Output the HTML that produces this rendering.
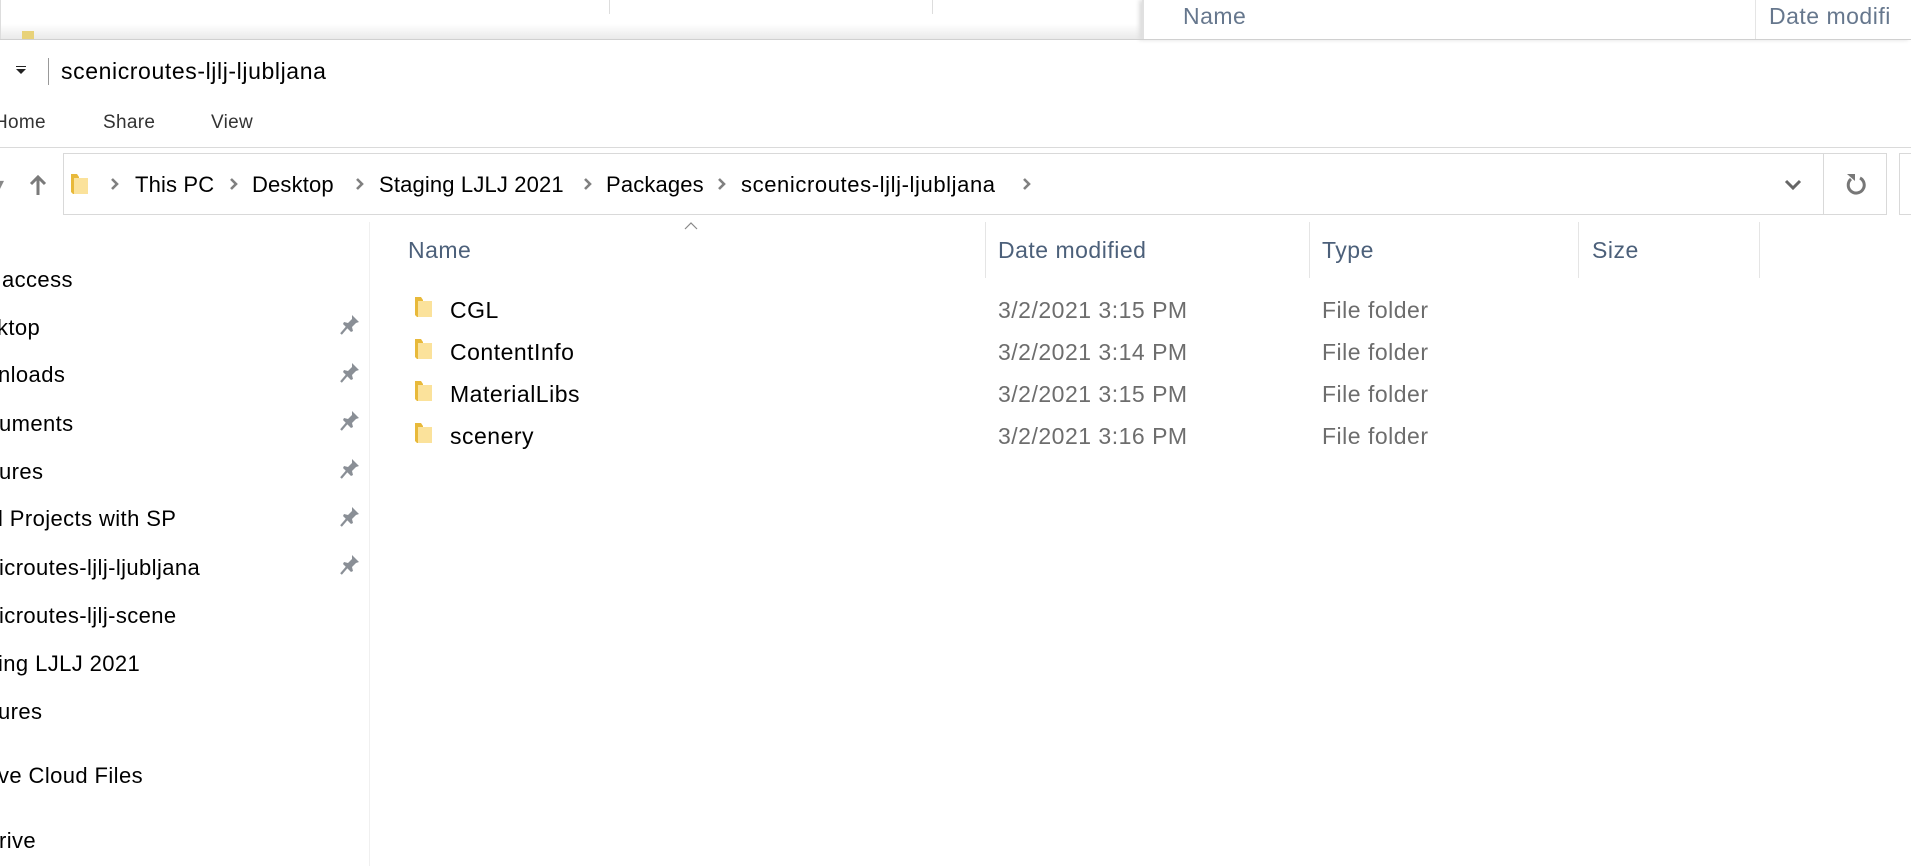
<!DOCTYPE html>
<html><head><meta charset="utf-8"><style>
*{margin:0;padding:0;box-sizing:border-box}
body{width:1911px;height:866px;overflow:hidden;background:#fff;position:relative;font-family:"Liberation Sans",sans-serif;color:#000}
.a{position:absolute;white-space:nowrap;line-height:26px;font-size:23px;letter-spacing:0.5px}
.n{font-size:22px;letter-spacing:0.4px}
.b{font-size:22px;letter-spacing:0.15px}
.h{color:#4c607a}
.g{color:#6d6d6d}
.sep{position:absolute;width:1px;background:#e5e5e5}
.fold{position:absolute;width:19px;height:22px}
.pin{position:absolute;width:22px;height:24px}
.chev{position:absolute}
</style></head><body>
<!-- background window strip -->
<div style="position:absolute;left:0;top:0;width:1142px;height:40px;background:linear-gradient(#fff 60%,#e8e8e8);border-left:1px solid #ddd"></div>
<div style="position:absolute;left:609px;top:0;width:1px;height:14px;background:#ddd"></div>
<div style="position:absolute;left:932px;top:0;width:1px;height:14px;background:#ddd"></div>
<div style="position:absolute;left:22px;top:31px;width:12px;height:9px;background:#e8d27a"></div>
<div style="position:absolute;left:1142px;top:0;width:769px;height:40px;background:#fff;border-left:2px solid #e0e0e0;box-shadow:-3px 0 4px #ddd"></div>
<div class="a h" style="left:1183px;top:3px;font-size:23px;opacity:.85">Name</div>
<div style="position:absolute;left:1755px;top:0;width:1px;height:40px;background:#e5e5e5"></div>
<div class="a h" style="left:1769px;top:3px;font-size:23px;opacity:.85">Date modifi</div>
<div style="position:absolute;left:0;top:39px;width:1911px;height:1px;background:#d0d0d0"></div>

<!-- title -->
<div style="position:absolute;left:16px;top:69px;width:0;height:0;border-left:5px solid transparent;border-right:5px solid transparent;border-top:5px solid #222"></div>
<div style="position:absolute;left:16px;top:66px;width:10px;height:1px;background:#222"></div>
<div style="position:absolute;left:48px;top:58px;width:1px;height:27px;background:#999"></div>
<div class="a" style="left:61px;top:58px;font-size:23px;letter-spacing:0.6px">scenicroutes-ljlj-ljubljana</div>

<!-- ribbon -->
<div class="a" style="left:-6px;top:110px;font-size:19px;letter-spacing:0.3px;color:#333">Home</div>
<div class="a" style="left:103px;top:110px;font-size:19px;letter-spacing:0.3px;color:#333">Share</div>
<div class="a" style="left:211px;top:110px;font-size:19px;letter-spacing:0.3px;color:#333">View</div>
<div style="position:absolute;left:0;top:147px;width:1911px;height:1px;background:#dadada"></div>

<!-- address bar -->
<div class="a" style="left:-4px;top:172px;color:#888;font-size:16px">▾</div>
<svg style="position:absolute;left:28px;top:173px" width="20" height="24" viewBox="0 0 20 24"><path d="M10 22V4M3 11l7-7 7 7" stroke="#7a7a7a" stroke-width="3" fill="none"/></svg>
<div style="position:absolute;left:63px;top:153px;width:1824px;height:62px;border:1px solid #d9d9d9"></div>
<div style="position:absolute;left:1823px;top:153px;width:1px;height:62px;background:#d9d9d9"></div>
<div style="position:absolute;left:1899px;top:153px;width:20px;height:62px;border:1px solid #d9d9d9"></div>
<svg class="fold" style="left:70px;top:173px" viewBox="0 0 19 22"><path d="M1 1h6l2 3v17H3L1 19z" fill="#e8b93a"/><path d="M4 5h14v16H4z" fill="#fbe29b"/></svg>
<svg class="chev" style="left:110px;top:177px" width="10" height="14" viewBox="0 0 10 14"><path d="M2 2l5 5-5 5" stroke="#808080" stroke-width="2.6" fill="none"/></svg>
<div class="a b" style="left:135px;top:172px">This PC</div>
<svg class="chev" style="left:229px;top:177px" width="10" height="14" viewBox="0 0 10 14"><path d="M2 2l5 5-5 5" stroke="#808080" stroke-width="2.6" fill="none"/></svg>
<div class="a b" style="left:252px;top:172px">Desktop</div>
<svg class="chev" style="left:355px;top:177px" width="10" height="14" viewBox="0 0 10 14"><path d="M2 2l5 5-5 5" stroke="#808080" stroke-width="2.6" fill="none"/></svg>
<div class="a b" style="left:379px;top:172px">Staging LJLJ 2021</div>
<svg class="chev" style="left:583px;top:177px" width="10" height="14" viewBox="0 0 10 14"><path d="M2 2l5 5-5 5" stroke="#808080" stroke-width="2.6" fill="none"/></svg>
<div class="a b" style="left:606px;top:172px">Packages</div>
<svg class="chev" style="left:717px;top:177px" width="10" height="14" viewBox="0 0 10 14"><path d="M2 2l5 5-5 5" stroke="#808080" stroke-width="2.6" fill="none"/></svg>
<div class="a b" style="left:741px;top:172px;letter-spacing:0.6px">scenicroutes-ljlj-ljubljana</div>
<svg class="chev" style="left:1022px;top:177px" width="10" height="14" viewBox="0 0 10 14"><path d="M2 2l5 5-5 5" stroke="#808080" stroke-width="2.6" fill="none"/></svg>
<svg style="position:absolute;left:1784px;top:179px" width="18" height="12" viewBox="0 0 18 12"><path d="M2 2l7 7 7-7" stroke="#666" stroke-width="3" fill="none"/></svg>
<svg style="position:absolute;left:1843px;top:172px" width="24" height="26" viewBox="0 0 24 26"><path d="M8 7A8 8 0 1 0 17 6" stroke="#777" stroke-width="3" fill="none"/><path d="M4 2h8v7z" fill="#777"/></svg>

<!-- left pane divider -->
<div style="position:absolute;left:369px;top:222px;width:1px;height:644px;background:#f0f0f0"></div>

<!-- column headers -->
<svg style="position:absolute;left:684px;top:222px" width="14" height="8" viewBox="0 0 14 8"><path d="M1 7l6-6 6 6" stroke="#888" stroke-width="1.2" fill="none"/></svg>
<div class="a h" style="left:408px;top:237px">Name</div>
<div class="sep" style="left:985px;top:222px;height:56px"></div>
<div class="a h" style="left:998px;top:237px">Date modified</div>
<div class="sep" style="left:1309px;top:222px;height:56px"></div>
<div class="a h" style="left:1322px;top:237px">Type</div>
<div class="sep" style="left:1578px;top:222px;height:56px"></div>
<div class="a h" style="left:1592px;top:237px">Size</div>
<div class="sep" style="left:1759px;top:222px;height:56px"></div>

<!-- rows -->
<svg class="fold" style="left:414px;top:296px" viewBox="0 0 19 22"><path d="M1 1h6l2 3v17H3L1 19z" fill="#e8b93a"/><path d="M4 5h14v16H4z" fill="#fbe29b"/></svg>
<div class="a" style="left:450px;top:297px">CGL</div>
<div class="a g" style="left:998px;top:297px">3/2/2021 3:15 PM</div>
<div class="a g" style="left:1322px;top:297px">File folder</div>

<svg class="fold" style="left:414px;top:338px" viewBox="0 0 19 22"><path d="M1 1h6l2 3v17H3L1 19z" fill="#e8b93a"/><path d="M4 5h14v16H4z" fill="#fbe29b"/></svg>
<div class="a" style="left:450px;top:339px">ContentInfo</div>
<div class="a g" style="left:998px;top:339px">3/2/2021 3:14 PM</div>
<div class="a g" style="left:1322px;top:339px">File folder</div>

<svg class="fold" style="left:414px;top:380px" viewBox="0 0 19 22"><path d="M1 1h6l2 3v17H3L1 19z" fill="#e8b93a"/><path d="M4 5h14v16H4z" fill="#fbe29b"/></svg>
<div class="a" style="left:450px;top:381px">MaterialLibs</div>
<div class="a g" style="left:998px;top:381px">3/2/2021 3:15 PM</div>
<div class="a g" style="left:1322px;top:381px">File folder</div>

<svg class="fold" style="left:414px;top:422px" viewBox="0 0 19 22"><path d="M1 1h6l2 3v17H3L1 19z" fill="#e8b93a"/><path d="M4 5h14v16H4z" fill="#fbe29b"/></svg>
<div class="a" style="left:450px;top:423px">scenery</div>
<div class="a g" style="left:998px;top:423px">3/2/2021 3:16 PM</div>
<div class="a g" style="left:1322px;top:423px">File folder</div>

<!-- nav pane -->
<div class="a n" style="left:2px;top:267px">access</div>
<div class="a n" style="left:-3px;top:315px">ktop</div>
<div class="a n" style="left:-2px;top:362px">nloads</div>
<div class="a n" style="left:-1px;top:411px">uments</div>
<div class="a n" style="left:-1px;top:459px">ures</div>
<div class="a n" style="left:-2px;top:506px">l Projects with SP</div>
<div class="a n" style="left:-1px;top:555px">icroutes-ljlj-ljubljana</div>
<div class="a n" style="left:-1px;top:603px">icroutes-ljlj-scene</div>
<div class="a n" style="left:-2px;top:651px">ing LJLJ 2021</div>
<div class="a n" style="left:-2px;top:699px">ures</div>
<div class="a n" style="left:-2px;top:763px">ve Cloud Files</div>
<div class="a n" style="left:-1px;top:828px">rive</div>

<svg class="pin" style="left:339px;top:313px" viewBox="0 0 22 24"><path d="M13 2l7 7-3 1-4 4 1 4-2 1-8-8 1-2 4 1 4-4z" fill="#8a8f96"/><path d="M8 14l-6 7" stroke="#8a8f96" stroke-width="2.2"/></svg>
<svg class="pin" style="left:339px;top:361px" viewBox="0 0 22 24"><path d="M13 2l7 7-3 1-4 4 1 4-2 1-8-8 1-2 4 1 4-4z" fill="#8a8f96"/><path d="M8 14l-6 7" stroke="#8a8f96" stroke-width="2.2"/></svg>
<svg class="pin" style="left:339px;top:409px" viewBox="0 0 22 24"><path d="M13 2l7 7-3 1-4 4 1 4-2 1-8-8 1-2 4 1 4-4z" fill="#8a8f96"/><path d="M8 14l-6 7" stroke="#8a8f96" stroke-width="2.2"/></svg>
<svg class="pin" style="left:339px;top:457px" viewBox="0 0 22 24"><path d="M13 2l7 7-3 1-4 4 1 4-2 1-8-8 1-2 4 1 4-4z" fill="#8a8f96"/><path d="M8 14l-6 7" stroke="#8a8f96" stroke-width="2.2"/></svg>
<svg class="pin" style="left:339px;top:505px" viewBox="0 0 22 24"><path d="M13 2l7 7-3 1-4 4 1 4-2 1-8-8 1-2 4 1 4-4z" fill="#8a8f96"/><path d="M8 14l-6 7" stroke="#8a8f96" stroke-width="2.2"/></svg>
<svg class="pin" style="left:339px;top:553px" viewBox="0 0 22 24"><path d="M13 2l7 7-3 1-4 4 1 4-2 1-8-8 1-2 4 1 4-4z" fill="#8a8f96"/><path d="M8 14l-6 7" stroke="#8a8f96" stroke-width="2.2"/></svg>
</body></html>
